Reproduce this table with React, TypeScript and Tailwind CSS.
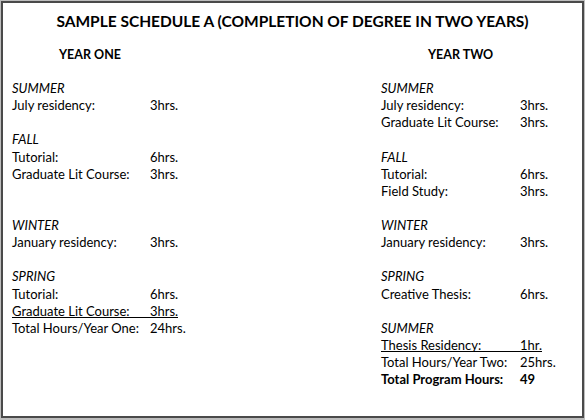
import React from "react";

type Row =
  | { kind: "season"; text: string }
  | { kind: "item"; label: string; hrs: string; underline?: boolean; bold?: boolean }
  | { kind: "blank" };

const left: Row[] = [
  { kind: "season", text: "SUMMER" },
  { kind: "item", label: "July residency:", hrs: "3hrs." },
  { kind: "blank" },
  { kind: "season", text: "FALL" },
  { kind: "item", label: "Tutorial:", hrs: "6hrs." },
  { kind: "item", label: "Graduate Lit Course:", hrs: "3hrs." },
  { kind: "blank" },
  { kind: "blank" },
  { kind: "season", text: "WINTER" },
  { kind: "item", label: "January residency:", hrs: "3hrs." },
  { kind: "blank" },
  { kind: "season", text: "SPRING" },
  { kind: "item", label: "Tutorial:", hrs: "6hrs." },
  { kind: "item", label: "Graduate Lit Course:", hrs: "3hrs.", underline: true },
  { kind: "item", label: "Total Hours/Year One:", hrs: "24hrs." },
];

const right: Row[] = [
  { kind: "season", text: "SUMMER" },
  { kind: "item", label: "July residency:", hrs: "3hrs." },
  { kind: "item", label: "Graduate Lit Course:", hrs: "3hrs." },
  { kind: "blank" },
  { kind: "season", text: "FALL" },
  { kind: "item", label: "Tutorial:", hrs: "6hrs." },
  { kind: "item", label: "Field Study:", hrs: "3hrs." },
  { kind: "blank" },
  { kind: "season", text: "WINTER" },
  { kind: "item", label: "January residency:", hrs: "3hrs." },
  { kind: "blank" },
  { kind: "season", text: "SPRING" },
  { kind: "item", label: "Creative Thesis:", hrs: "6hrs." },
  { kind: "blank" },
  { kind: "season", text: "SUMMER" },
  { kind: "item", label: "Thesis Residency:", hrs: "1hr.", underline: true },
  { kind: "item", label: "Total Hours/Year Two:", hrs: "25hrs." },
  { kind: "item", label: "Total Program Hours:", hrs: "49", bold: true },
];

function Column({ title, rows, labelW }: { title: string; rows: Row[]; labelW: string }) {
  return (
    <div className="flex flex-col">
      <div className="pl-[47px] font-bold text-[12.5px] leading-[20px] h-[20px]">{title}</div>
      <div className="mt-[15px] flex flex-col">
        {rows.map((r, i) => {
          if (r.kind === "blank") return <div key={i} className="h-[17.14px]" />;
          if (r.kind === "season")
            return (
              <div key={i} className="italic h-[17.14px] leading-[17.14px]">
                {r.text}
              </div>
            );
          return (
            <div key={i} className={"h-[17.14px] leading-[17.14px] " + (r.bold ? "font-bold" : "")}>
              <div
                className={
                  "flex w-fit " + (r.underline ? "h-[15px] border-b border-black" : "h-[17.14px]")
                }
              >
                <span className={labelW + " shrink-0 whitespace-nowrap"}>{r.label}</span>
                <span className="whitespace-nowrap">{r.hrs}</span>
              </div>
            </div>
          );
        })}
      </div>
    </div>
  );
}

export default function App() {
  return (
    <div
      className="w-[585px] h-[420px] bg-[#bdbdbd] pt-px pl-px pr-px pb-[2px]"
      style={{ fontFamily: "Lato, 'Open Sans', sans-serif" }}
    >
      <div className="h-full border-2 border-[#4a4a4a] bg-white text-black text-[13px] flex flex-col">
        <div className="text-center font-bold text-[15.5px] leading-[20px] mt-[8px]">
          SAMPLE SCHEDULE A (COMPLETION OF DEGREE IN TWO YEARS)
        </div>
        <div className="mt-[14px] pl-[9px] flex">
          <div className="w-[369px] shrink-0">
            <Column title="YEAR ONE" rows={left} labelW="w-[138px]" />
          </div>
          <Column title="YEAR TWO" rows={right} labelW="w-[139px]" />
        </div>
      </div>
    </div>
  );
}
